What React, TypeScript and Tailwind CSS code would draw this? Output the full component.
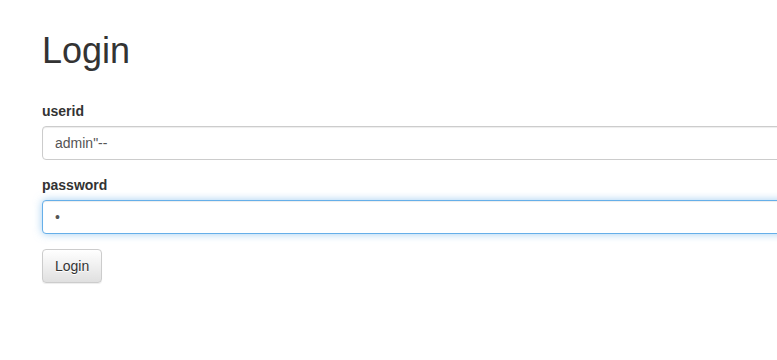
import { useState } from "react";

const inputBase =
    "block w-[900px] h-[34px] px-3 py-[6px] text-[14px] leading-[20px] text-[#555] bg-white border rounded-[4px] outline-none";

const LoginPage = () => {
    const [userid, setUserid] = useState('admin"--');
    const [password, setPassword] = useState("a");

    return (
        <div className="w-full h-[360px] overflow-hidden bg-white font-['Liberation_Sans',Arial,sans-serif] text-[#333]">
            <div className="pl-[42px] pt-[31px]">
                <h1 className="text-[36px] leading-[39.6px] font-normal mb-[30px]">
                    Login
                </h1>
                <form onSubmit={(e) => e.preventDefault()}>
                    <div className="mb-[15px]">
                        <label className="block text-[14px] leading-[20px] font-bold mb-[5px]">
                            userid
                        </label>
                        <input
                            type="text"
                            value={userid}
                            onChange={(e) => setUserid(e.target.value)}
                            className={`${inputBase} border-[#ccc] shadow-[inset_0_1px_1px_rgba(0,0,0,0.075)]`}
                        />
                    </div>
                    <div className="mb-[15px]">
                        <label className="block text-[14px] leading-[20px] font-bold mb-[5px]">
                            password
                        </label>
                        <input
                            type="password"
                            value={password}
                            onChange={(e) => setPassword(e.target.value)}
                            className={`${inputBase} border-[#66afe9] shadow-[inset_0_1px_1px_rgba(0,0,0,0.075),0_0_8px_rgba(102,175,233,0.6)]`}
                        />
                    </div>
                    <button
                        type="submit"
                        className="h-[34px] px-3 py-[6px] text-[14px] leading-[20px] text-[#333] border border-[#ccc] rounded-[4px] bg-gradient-to-b from-white to-[#e0e0e0] [text-shadow:0_1px_0_#fff] shadow-[inset_0_1px_0_rgba(255,255,255,0.15),0_1px_1px_rgba(0,0,0,0.075)]"
                    >
                        Login
                    </button>
                </form>
            </div>
        </div>
    );
};

export default function App() {
    return <LoginPage />;
}
